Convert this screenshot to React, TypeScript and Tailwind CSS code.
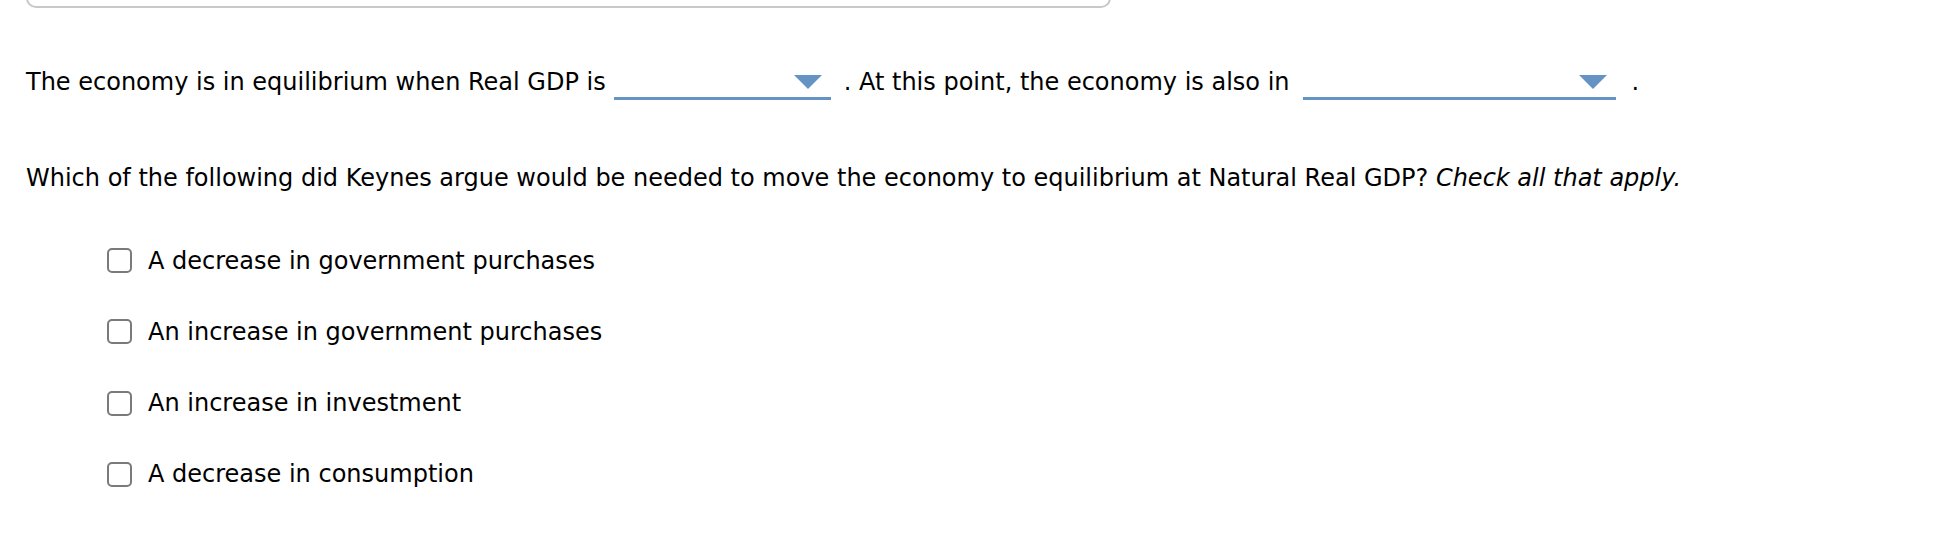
import React from "react";

function Dropdown({ width }: { width: string }) {
  return (
    <div className={`relative mt-[4px] h-[28px] ${width} border-b-[3px] border-[#6593c3]`}>
      <svg
        className="absolute top-[3px] right-[9px]"
        width="28"
        height="14"
        viewBox="0 0 28 14"
      >
        <polygon points="0,0 28,0 14,14" fill="#6593c3" />
      </svg>
    </div>
  );
}

function Option({ label }: { label: string }) {
  return (
    <div className="flex items-center h-[25px] pl-[81px]">
      <div className="w-[25px] h-[25px] border-2 border-[#7a7a7a] rounded-[5px] bg-white shrink-0" />
      <span className="ml-[16px] leading-[28px] whitespace-nowrap">{label}</span>
    </div>
  );
}

export default function App() {
  return (
    <div className="w-[1940px] h-[546px] bg-white overflow-hidden pl-[26px] font-['DejaVu_Sans',Verdana,sans-serif] text-[24px] text-black">
      <div className="w-[1085px] h-[20px] -mt-[12px] border-2 border-[#c8c8c8] rounded-[10px]" />
      <div className="mt-[60px] flex items-start leading-[28px] whitespace-nowrap">
        <span>The economy is in equilibrium when Real GDP is</span>
        <div className="ml-[8px]">
          <Dropdown width="w-[217px]" />
        </div>
        <span className="ml-[13px]">. At this point, the economy is also in</span>
        <div className="ml-[13px]">
          <Dropdown width="w-[313px]" />
        </div>
        <span className="ml-[16px]">.</span>
      </div>
      <p className="mt-[63.5px] leading-[28px] whitespace-nowrap">
        Which of the following did Keynes argue would be needed to move the economy to equilibrium at Natural Real GDP?{" "}
        <em className="italic">Check all that apply.</em>
      </p>
      <div className="mt-[56.5px] flex flex-col gap-[46.3px]">
        <Option label="A decrease in government purchases" />
        <Option label="An increase in government purchases" />
        <Option label="An increase in investment" />
        <Option label="A decrease in consumption" />
      </div>
    </div>
  );
}
